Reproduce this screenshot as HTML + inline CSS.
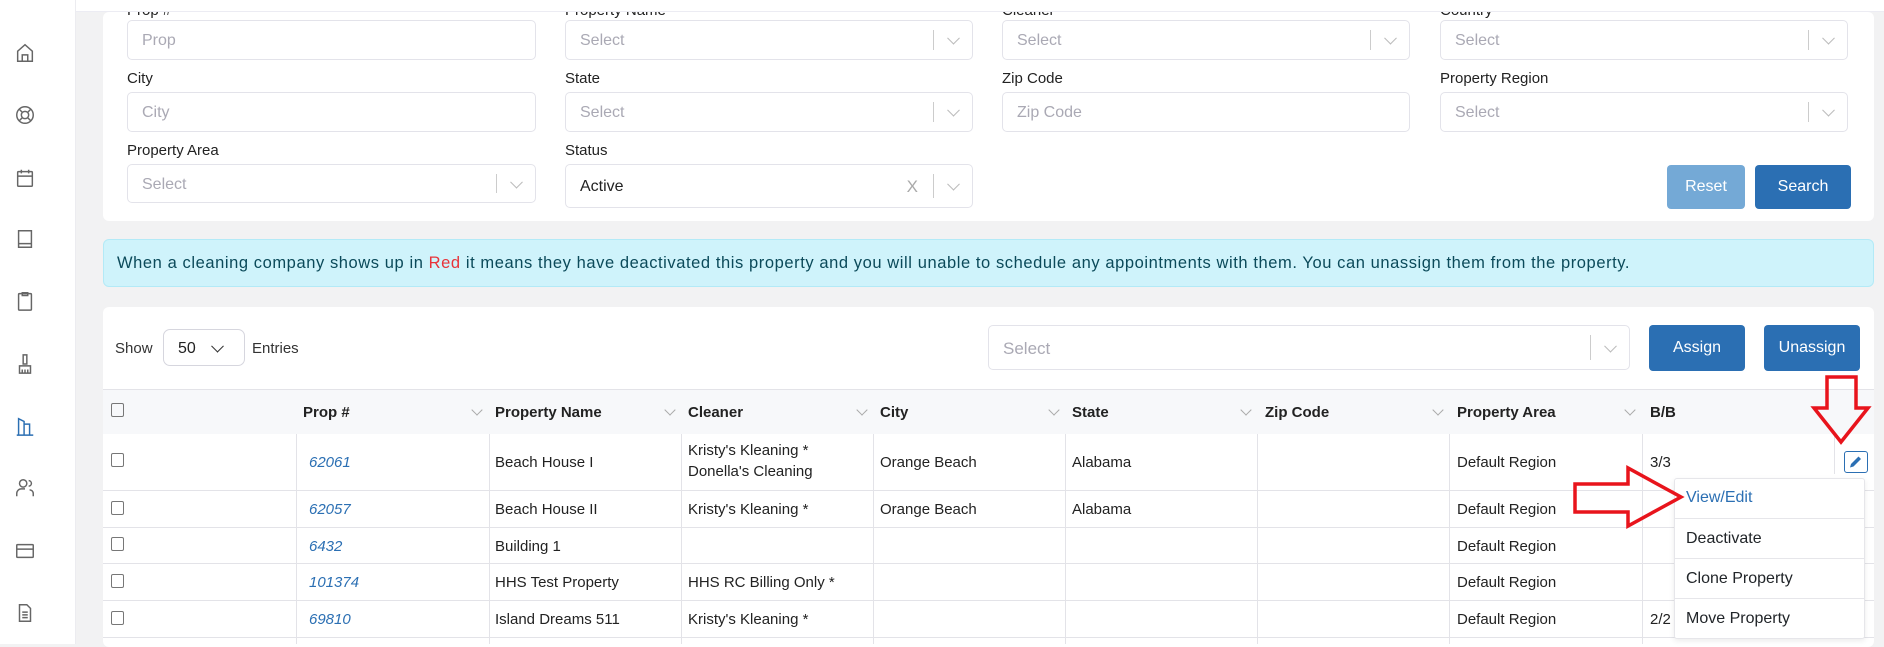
<!DOCTYPE html>
<html><head><meta charset="utf-8"><style>
*{box-sizing:border-box;margin:0;padding:0}
body{width:1884px;height:644px;overflow:hidden;background:#f2f2f3;font-family:"Liberation Sans",sans-serif;color:#212529;position:relative;font-size:15px}
.abs{position:absolute}
.side{left:0;top:0;width:76px;height:644px;background:#fff;border-right:1px solid #ececf0}
.top{left:76px;top:0;width:1808px;height:12px;background:#fff;border-bottom:1px solid #ececf3;z-index:5}
.card{background:#fff;border-radius:6px}
.inp{border:1px solid #e3e3ea;border-radius:5px;background:#fff;color:#aaa9b4;font-size:16px;padding-left:14px;padding-top:2px;display:flex;align-items:center}
.lbl{font-size:15px;color:#222}
.sep{position:absolute;right:38px;top:9px;bottom:9px;width:1px;background:#ccc}
.chev{position:absolute;right:14px;top:50%;width:9px;height:9px;border-right:1.5px solid #bbb;border-bottom:1.5px solid #bbb;transform:translateY(-70%) rotate(45deg)}
.btn{color:#fff;border-radius:4px;display:flex;align-items:center;justify-content:center;font-size:16px;background:#2b6fb3}
.th{font-weight:bold;font-size:15px;color:#222}
.hl{position:absolute;top:0;bottom:0;width:1px;background:#e3e3e8}
.rl{position:absolute;left:103px;width:1771px;height:1px;background:#e3e3e8}
.cb{position:absolute;left:111px;width:13px;height:14px;border:1.5px solid #777;border-radius:2px}
.t{position:absolute;font-size:15px;color:#222;white-space:nowrap}
.lnk{color:#2b6fb3;font-style:italic}
.hch{position:absolute;width:8px;height:8px;border-right:1px solid #aaa;border-bottom:1px solid #aaa;transform:rotate(45deg)}
.ico{position:absolute;left:14px;width:22px;height:22px;fill:none;stroke:#666;stroke-width:1.6}
</style></head><body>
<div class="abs side"></div>
<svg class="ico" style="top:42px" viewBox="0 0 24 24"><path d="M4 21V10l8-7 8 7v11zM9 21v-7h6v7"/></svg>
<svg class="ico" style="top:104px" viewBox="0 0 24 24"><circle cx="12" cy="12" r="9"/><circle cx="12" cy="12" r="4"/><path d="M6 6l3 3M18 6l-3 3M6 18l3-3M18 18l-3-3"/></svg>
<svg class="ico" style="top:167px" viewBox="0 0 24 24"><rect x="4" y="5" width="16" height="16" rx="1"/><path d="M4 10h16M8 3v4M16 3v4"/></svg>
<svg class="ico" style="top:228px" viewBox="0 0 24 24"><path d="M5 3h14v18H5zM5 17h14"/></svg>
<svg class="ico" style="top:290px" viewBox="0 0 24 24"><rect x="5" y="4" width="14" height="18" rx="1"/><path d="M9 3h6v3H9z"/></svg>
<svg class="ico" style="top:353px" viewBox="0 0 24 24"><path d="M10 2h4v10h-4zM6 22v-8h12v8zM9 18v4M12 18v4M15 18v4"/></svg>
<svg class="ico" style="top:415px;stroke:#2b6fb3" viewBox="0 0 24 24"><path d="M3 22h18M5 22V4l6 3v15M11 10h6v12"/></svg>
<svg class="ico" style="top:477px" viewBox="0 0 24 24"><circle cx="10" cy="7" r="4"/><path d="M3 21v-3a5 5 0 0 1 5-5h4M16 4a3 3 0 0 1 0 6M17 14a4 4 0 0 1 4 4v3"/></svg>
<svg class="ico" style="top:540px" viewBox="0 0 24 24"><rect x="3" y="5" width="18" height="14" rx="1"/><path d="M3 10h18"/></svg>
<svg class="ico" style="top:602px" viewBox="0 0 24 24"><path d="M6 3h8l4 4v14H6zM9 11h6M9 14h6M9 17h6"/></svg>
<div class="abs top"></div>

<div class="abs card" style="left:103px;top:12px;width:1771px;height:209px"></div>
<div class="abs lbl" style="left:127px;top:2px">Prop #</div>
<div class="abs lbl" style="left:565px;top:2px">Property Name</div>
<div class="abs lbl" style="left:1002px;top:2px">Cleaner</div>
<div class="abs lbl" style="left:1440px;top:2px">Country</div>
<div class="abs inp" style="left:127px;top:20px;width:409px;height:40px">Prop</div>
<div class="abs inp" style="left:565px;top:20px;width:408px;height:40px">Select<span class="sep"></span><span class="chev"></span></div>
<div class="abs inp" style="left:1002px;top:20px;width:408px;height:40px">Select<span class="sep"></span><span class="chev"></span></div>
<div class="abs inp" style="left:1440px;top:20px;width:408px;height:40px">Select<span class="sep"></span><span class="chev"></span></div>
<div class="abs lbl" style="left:127px;top:70px">City</div>
<div class="abs lbl" style="left:565px;top:70px">State</div>
<div class="abs lbl" style="left:1002px;top:70px">Zip Code</div>
<div class="abs lbl" style="left:1440px;top:70px">Property Region</div>
<div class="abs inp" style="left:127px;top:92px;width:409px;height:40px">City</div>
<div class="abs inp" style="left:565px;top:92px;width:408px;height:40px">Select<span class="sep"></span><span class="chev"></span></div>
<div class="abs inp" style="left:1002px;top:92px;width:408px;height:40px">Zip Code</div>
<div class="abs inp" style="left:1440px;top:92px;width:408px;height:40px">Select<span class="sep"></span><span class="chev"></span></div>
<div class="abs lbl" style="left:127px;top:142px">Property Area</div>
<div class="abs lbl" style="left:565px;top:142px">Status</div>
<div class="abs inp" style="left:127px;top:164px;width:409px;height:39px">Select<span class="sep"></span><span class="chev"></span></div>
<div class="abs inp" style="left:565px;top:164px;width:408px;height:44px;color:#222">Active<span style="position:absolute;right:54px;color:#aaa;font-size:17px">X</span><span class="sep"></span><span class="chev"></span></div>
<div class="abs btn" style="left:1667px;top:165px;width:78px;height:44px;background:#74a9d6">Reset</div>
<div class="abs btn" style="left:1755px;top:165px;width:96px;height:44px">Search</div>

<div class="abs" style="left:103px;top:239px;width:1771px;height:48px;background:#cff3fb;border:1px solid #b3eaf7;border-radius:6px;color:#0b4a5a;font-size:16.5px;padding:14px 0 0 13px;letter-spacing:0.58px;white-space:nowrap">When a cleaning company shows up in <span style="color:#e8333a">Red</span> it means they have deactivated this property and you will unable to schedule any appointments with them. You can unassign them from the property.</div>

<div class="abs card" style="left:103px;top:307px;width:1771px;height:340px"></div>
<div class="abs t" style="left:115px;top:340px;color:#333">Show</div>
<div class="abs inp" style="left:163px;top:329px;width:82px;height:37px;color:#222;border-radius:7px;border-color:#d6d6de">50<span class="chev" style="border-color:#333;right:22px"></span></div>
<div class="abs t" style="left:252px;top:340px;color:#333">Entries</div>
<div class="abs inp" style="left:988px;top:325px;width:642px;height:45px;font-size:17px">Select<span class="sep"></span><span class="chev"></span></div>
<div class="abs btn" style="left:1649px;top:325px;width:96px;height:46px">Assign</div>
<div class="abs btn" style="left:1764px;top:325px;width:96px;height:46px">Unassign</div>

<div class="abs" style="left:103px;top:389px;width:1771px;height:45px;background:#f7f8fa;border-top:1px solid #e3e3e8"></div>
<div class="cb" style="top:403px"></div>
<div class="abs th" style="left:303px;top:404px">Prop #</div><div class="hch" style="left:473px;top:406px"></div>
<div class="abs th" style="left:495px;top:404px">Property Name</div><div class="hch" style="left:666px;top:406px"></div>
<div class="abs th" style="left:688px;top:404px">Cleaner</div><div class="hch" style="left:858px;top:406px"></div>
<div class="abs th" style="left:880px;top:404px">City</div><div class="hch" style="left:1050px;top:406px"></div>
<div class="abs th" style="left:1072px;top:404px">State</div><div class="hch" style="left:1242px;top:406px"></div>
<div class="abs th" style="left:1265px;top:404px">Zip Code</div><div class="hch" style="left:1434px;top:406px"></div>
<div class="abs th" style="left:1457px;top:404px">Property Area</div><div class="hch" style="left:1626px;top:406px"></div>
<div class="abs th" style="left:1650px;top:404px">B/B</div>

<div class="abs" style="left:0;top:434px;width:1884px;height:210px">
<div class="hl" style="left:296px"></div><div class="hl" style="left:489px"></div><div class="hl" style="left:681px"></div><div class="hl" style="left:873px"></div><div class="hl" style="left:1065px"></div><div class="hl" style="left:1257px"></div><div class="hl" style="left:1449px"></div><div class="hl" style="left:1642px"></div><div class="hl" style="left:1834px;height:40px"></div>
</div>
<div class="rl" style="top:490px"></div><div class="rl" style="top:527px"></div><div class="rl" style="top:563px"></div><div class="rl" style="top:600px"></div><div class="rl" style="top:637px"></div>

<div class="cb" style="top:453px"></div>
<div class="t lnk" style="left:309px;top:454px">62061</div>
<div class="t" style="left:495px;top:454px">Beach House I</div>
<div class="t" style="left:688px;top:442px">Kristy's Kleaning *</div>
<div class="t" style="left:688px;top:463px">Donella's Cleaning</div>
<div class="t" style="left:880px;top:454px">Orange Beach</div>
<div class="t" style="left:1072px;top:454px">Alabama</div>
<div class="t" style="left:1457px;top:454px">Default Region</div>
<div class="t" style="left:1650px;top:454px">3/3</div>

<div class="cb" style="top:501px"></div>
<div class="t lnk" style="left:309px;top:501px">62057</div>
<div class="t" style="left:495px;top:501px">Beach House II</div>
<div class="t" style="left:688px;top:501px">Kristy's Kleaning *</div>
<div class="t" style="left:880px;top:501px">Orange Beach</div>
<div class="t" style="left:1072px;top:501px">Alabama</div>
<div class="t" style="left:1457px;top:501px">Default Region</div>

<div class="cb" style="top:537px"></div>
<div class="t lnk" style="left:309px;top:538px">6432</div>
<div class="t" style="left:495px;top:538px">Building 1</div>
<div class="t" style="left:1457px;top:538px">Default Region</div>

<div class="cb" style="top:574px"></div>
<div class="t lnk" style="left:309px;top:574px">101374</div>
<div class="t" style="left:495px;top:574px">HHS Test Property</div>
<div class="t" style="left:688px;top:574px">HHS RC Billing Only *</div>
<div class="t" style="left:1457px;top:574px">Default Region</div>

<div class="cb" style="top:611px"></div>
<div class="t lnk" style="left:309px;top:611px">69810</div>
<div class="t" style="left:495px;top:611px">Island Dreams 511</div>
<div class="t" style="left:688px;top:611px">Kristy's Kleaning *</div>
<div class="t" style="left:1457px;top:611px">Default Region</div>
<div class="t" style="left:1650px;top:611px">2/2</div>

<div class="abs" style="left:1844px;top:451px;width:24px;height:22px;border:1.5px solid #2b6fb3;border-radius:3px;background:#fff"><svg width="21" height="19" viewBox="0 0 21 19"><path d="M5 15.5l1-3.5 7.5-7.5 2.5 2.5-7.5 7.5z" fill="#2b6fb3"/></svg></div>

<div class="abs" style="left:1674px;top:478px;width:191px;height:161px;background:#fff;border:1px solid #e6e6ea;border-radius:3px;box-shadow:0 2px 6px rgba(0,0,0,.08)">
<div style="height:40px;border-bottom:1px solid #e6e6ea;padding:10px 0 0 11px;color:#2b6fb3;font-size:16px">View/Edit</div>
<div style="height:40px;border-bottom:1px solid #e6e6ea;padding:11px 0 0 11px;font-size:16px">Deactivate</div>
<div style="height:40px;border-bottom:1px solid #e6e6ea;padding:11px 0 0 11px;font-size:16px">Clone Property</div>
<div style="height:40px;padding:11px 0 0 11px;font-size:16px">Move Property</div>
</div>

<svg class="abs" style="left:0;top:0" width="1884" height="644">
<path d="M1827 377h29v31h12l-27 34-27-34h13z" fill="none" stroke="#e8141c" stroke-width="3.5"/>
<path d="M1575 484h53v-16l53 29-53 29v-14h-53z" fill="none" stroke="#e8141c" stroke-width="3.5"/>
</svg>
</body></html>
